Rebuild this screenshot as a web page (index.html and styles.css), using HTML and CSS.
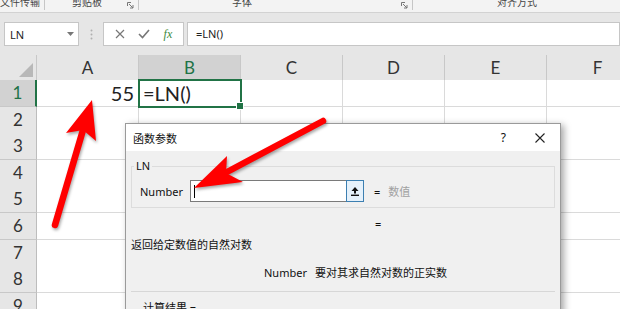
FILE: index.html
```html
<!DOCTYPE html>
<html lang="zh-CN">
<head>
    <meta charset="UTF-8">
    <title>函数参数</title>
    <link rel="stylesheet" href="styles.css">
</head>
<body>
    <div class="ribbon">
        <div class="rgroup g1"><span class="rlabel">文件传输</span></div>
        <div class="rgroup g2"><span class="rlabel">剪贴板</span>
            <svg class="launcher" width="7" height="7" viewBox="0 0 7 7"><path d="M0.5 4V0.5H4M2 2l4 4M6 3v3H3" stroke="#777" fill="none"/></svg>
        </div>
        <div class="rgroup g3"><span class="rlabel">字体</span>
            <svg class="launcher" width="7" height="7" viewBox="0 0 7 7"><path d="M0.5 4V0.5H4M2 2l4 4M6 3v3H3" stroke="#777" fill="none"/></svg>
        </div>
        <div class="rgroup g4"><span class="rlabel">对齐方式</span></div>
    </div>

    <div class="fbar">
        <div class="namebox">
            <span>LN</span>
            <svg width="7" height="4" viewBox="0 0 7 4"><path d="M0 0h7L3.5 4z" fill="#777"/></svg>
        </div>
        <div class="grip">
            <svg width="3" height="11" viewBox="0 0 3 11"><circle cx="1.5" cy="1.5" r="1" fill="#b0b0b0"/><circle cx="1.5" cy="5.5" r="1" fill="#b0b0b0"/><circle cx="1.5" cy="9.5" r="1" fill="#b0b0b0"/></svg>
        </div>
        <div class="fbtns">
            <svg width="10" height="10" viewBox="0 0 10 10"><path d="M1 1l8 8M9 1l-8 8" stroke="#777" stroke-width="1.2"/></svg>
            <svg width="12" height="10" viewBox="0 0 12 10"><path d="M1 5l3.5 3.5L11 1" stroke="#777" stroke-width="1.6" fill="none"/></svg>
            <span class="fx">fx</span>
        </div>
        <div class="finput">=LN()</div>
    </div>

    <div class="sheet">
        <div class="row head">
            <div class="corner"><svg width="14" height="14" viewBox="0 0 14 14"><path d="M14 0V14H0z" fill="#b8b8b8"/></svg></div>
            <div class="col">A</div><div class="col sel">B</div><div class="col">C</div><div class="col">D</div><div class="col">E</div><div class="col">F</div>
        </div>
        <div class="row">
            <div class="rh sel">1</div><div class="cell num">55</div><div class="cell active">=LN()</div><div class="cell"></div><div class="cell"></div><div class="cell"></div><div class="cell"></div>
        </div>
        <div class="row">
            <div class="rh">2</div><div class="cell"></div><div class="cell"></div><div class="cell"></div><div class="cell"></div><div class="cell"></div><div class="cell"></div>
        </div>
        <div class="row">
            <div class="rh">3</div><div class="cell"></div><div class="cell"></div><div class="cell"></div><div class="cell"></div><div class="cell"></div><div class="cell"></div>
        </div>
        <div class="row">
            <div class="rh">4</div><div class="cell"></div><div class="cell"></div><div class="cell"></div><div class="cell"></div><div class="cell"></div><div class="cell"></div>
        </div>
        <div class="row">
            <div class="rh">5</div><div class="cell"></div><div class="cell"></div><div class="cell"></div><div class="cell"></div><div class="cell"></div><div class="cell"></div>
        </div>
        <div class="row">
            <div class="rh">6</div><div class="cell"></div><div class="cell"></div><div class="cell"></div><div class="cell"></div><div class="cell"></div><div class="cell"></div>
        </div>
        <div class="row">
            <div class="rh">7</div><div class="cell"></div><div class="cell"></div><div class="cell"></div><div class="cell"></div><div class="cell"></div><div class="cell"></div>
        </div>
        <div class="row">
            <div class="rh">8</div><div class="cell"></div><div class="cell"></div><div class="cell"></div><div class="cell"></div><div class="cell"></div><div class="cell"></div>
        </div>
        <div class="row">
            <div class="rh">9</div><div class="cell"></div><div class="cell"></div><div class="cell"></div><div class="cell"></div><div class="cell"></div><div class="cell"></div>
        </div>
    </div>

    <!-- 函数参数 对话框 -->
    <div class="dialog">
        <div class="dtitle">
            <span>函数参数</span>
            <span class="dhelp">?</span>
            <svg class="dclose" width="10" height="10" viewBox="0 0 10 10"><path d="M0.5 0.5l9 9M9.5 0.5l-9 9" stroke="#222" stroke-width="1.1"/></svg>
        </div>
        <div class="dbody">
            <fieldset class="fgroup">
                <legend>LN</legend>
                <div class="param">
                    <span class="plabel">Number</span>
                    <div class="pinput"><i class="caret"></i></div>
                    <div class="pbtn">
                        <svg width="8" height="9" viewBox="0 0 8 9"><path d="M4 0L0.5 4H3v2.5h2V4h2.5z" fill="#111"/><rect x="0" y="7.6" width="8" height="1.4" fill="#111"/></svg>
                    </div>
                    <span class="peq">=</span>
                    <span class="pval">数值</span>
                </div>
            </fieldset>
            <div class="result">=</div>
            <div class="desc">返回给定数值的自然对数</div>
            <div class="argdesc"><span class="argname">Number</span>要对其求自然对数的正实数</div>
            <div class="sep"></div>
            <div class="calc">计算结果 =</div>
        </div>
    </div>

    <svg class="arrows" width="620" height="309" viewBox="0 0 620 309">
        <line x1="55" y1="225" x2="83" y2="130" stroke="#f00" stroke-width="6.5" stroke-linecap="round"/>
        <polygon points="92,100 96,141 83,130 66,133" fill="#f00"/>
        <line x1="323" y1="121" x2="227" y2="172" stroke="#f00" stroke-width="6.5" stroke-linecap="round"/>
        <polygon points="194,188 227,156 226,173 243,182" fill="#f00"/>
    </svg>
</body>
</html>
```

FILE: styles.css
```css
* {
    box-sizing: border-box;
}
body {
    margin: 0;
    width: 620px;
    height: 309px;
    overflow: hidden;
    position: relative;
    background-color: #e6e6e6;
    font-family: "Noto Sans", "Noto Sans CJK SC", sans-serif;
    color: #222;
}

/* Лента */
.ribbon {
    display: flex;
    height: 13px;
    background-color: #f3f3f3;
    border-bottom: 1px solid #d2d2d2;
    overflow: hidden;
    font-family: "Noto Sans CJK SC", sans-serif;
    font-size: 10px;
    line-height: 10px;
    color: #444;
}
.rgroup {
    display: flex;
    align-items: flex-start;
    height: 10px;
    border-right: 1px solid #c6c6c6;
}
.rlabel {
    margin-top: -3px;
    white-space: nowrap;
}
.launcher {
    margin: 2px 4px 0 auto;
}
.g1 { width: 45px; }
.g2 { width: 94px; }
.g2 .rlabel { margin-left: 27px; }
.g3 { width: 274px; }
.g3 .rlabel { margin-left: 93px; }
.g4 { flex: 1; border: none; }
.g4 .rlabel { margin-left: 84px; }

/* Строка формул */
.fbar {
    display: flex;
    align-items: center;
    height: 42px;
    padding: 9px 0 9px 4px;
    font-size: 11px;
}
.namebox {
    width: 75px;
    height: 24px;
    background-color: #fff;
    border: 1px solid #c6c6c6;
    display: flex;
    align-items: center;
    justify-content: space-between;
    padding: 0 4px 0 5px;
}
.grip {
    width: 24px;
    display: flex;
    justify-content: center;
}
.fbtns {
    width: 81px;
    height: 24px;
    background-color: #fff;
    border: 1px solid #c6c6c6;
    display: flex;
    align-items: center;
    justify-content: space-around;
    padding: 0 4px;
}
.fx {
    font-family: "Liberation Serif", serif;
    font-style: italic;
    font-size: 12px;
    color: #3d8a3d;
}
.finput {
    flex: 1;
    height: 24px;
    margin-left: 3px;
    background-color: #fff;
    border: 1px solid #c6c6c6;
    padding-left: 8px;
    line-height: 22px;
}

/* Лист */
.sheet {
    font-family: Lato, "Liberation Sans", sans-serif;
}
.row {
    display: grid;
    grid-template-columns: 37px repeat(6, 102px);
    height: 26.6px;
}
.row.head {
    height: 25px;
}
.corner {
    background-color: #e6e6e6;
    border-right: 1px solid #c8c8c8;
    border-bottom: 1px solid #bdbdbd;
    display: flex;
    align-items: flex-end;
    justify-content: flex-end;
    padding: 0 3px 4px 0;
}
.col {
    background-color: #e6e6e6;
    border-right: 1px solid #c8c8c8;
    border-bottom: 1px solid #bdbdbd;
    text-align: center;
    font-size: 17px;
    line-height: 25px;
    color: #333;
}
.col.sel {
    background-color: #d2d2d2;
    color: #217346;
    border-bottom: 2px solid #217346;
}
.rh {
    background-color: #e6e6e6;
    border-right: 1px solid #bdbdbd;
    border-bottom: 1px solid #c8c8c8;
    text-align: center;
    font-size: 17px;
    line-height: 26px;
    color: #333;
}
.rh.sel {
    background-color: #d2d2d2;
    color: #217346;
    border-right: 2px solid #217346;
}
.cell {
    background-color: #fff;
    border-right: 1px solid #dadada;
    border-bottom: 1px solid #dadada;
    font-size: 20px;
    line-height: 26px;
    padding: 0 4px;
    color: #222;
    white-space: nowrap;
}
.cell.num {
    text-align: right;
}
.cell.active {
    position: relative;
    outline: 2px solid #217346;
    outline-offset: -1px;
}
.cell.active::after {
    content: "";
    position: absolute;
    right: -4px;
    bottom: -4px;
    width: 6px;
    height: 6px;
    background-color: #217346;
    border: 1px solid #fff;
}

/* Диалог */
.dialog {
    position: absolute;
    left: 125px;
    top: 123px;
    width: 436px;
    height: 210px;
    background-color: #f0f0f0;
    border: 1px solid #9a9a9a;
    box-shadow: 3px 2px 7px rgba(0, 0, 0, 0.35);
    font-size: 11px;
    color: #111;
}
.dtitle {
    height: 27px;
    background-color: #fff;
    display: flex;
    align-items: center;
    padding: 0 15px 0 7px;
    font-family: "Noto Sans CJK SC", sans-serif;
}
.dhelp {
    margin-left: auto;
    margin-right: 29px;
    font-family: "Noto Sans", sans-serif;
    font-size: 12px;
}
.dbody {
    padding: 8px 5px 0 5px;
}
.fgroup {
    margin: 0;
    border: 1px solid #dcdcdc;
    padding: 7px 8px 5px 8px;
}
.fgroup legend {
    padding: 0 2px;
    margin-left: -6px;
    line-height: 14px;
}
.param {
    display: flex;
    align-items: center;
}
.plabel {
    width: 50px;
}
.pinput {
    width: 156px;
    height: 22px;
    background-color: #fff;
    border: 1px solid #7a7a7a;
    border-right: none;
    padding: 4px 0 0 3px;
}
.caret {
    display: block;
    width: 1px;
    height: 13px;
    background-color: #000;
}
.pbtn {
    width: 18px;
    height: 22px;
    background-color: #e5f1fb;
    border: 1px solid #3c7fb1;
    display: flex;
    align-items: center;
    justify-content: center;
}
.peq {
    margin-left: 10px;
}
.pval {
    margin-left: 8px;
    color: #a0a0a0;
    font-family: "Noto Sans CJK SC", sans-serif;
}
.result {
    margin-top: 9px;
    padding-left: 244px;
    line-height: 14px;
}
.desc {
    margin-top: 6px;
    line-height: 14px;
    font-family: "Noto Sans CJK SC", sans-serif;
}
.argdesc {
    margin-top: 15px;
    padding-left: 133px;
    line-height: 14px;
}
.argname {
    margin-right: 8px;
}
.sep {
    margin-top: 11px;
    border-top: 1px solid #d7d7d7;
}
.calc {
    margin-top: 9px;
    padding-left: 12px;
    line-height: 14px;
}

/* Стрелки */
.arrows {
    position: absolute;
    left: 0;
    top: 0;
    pointer-events: none;
    filter: drop-shadow(1px 2px 1.5px rgba(0, 0, 0, 0.35));
}
```
